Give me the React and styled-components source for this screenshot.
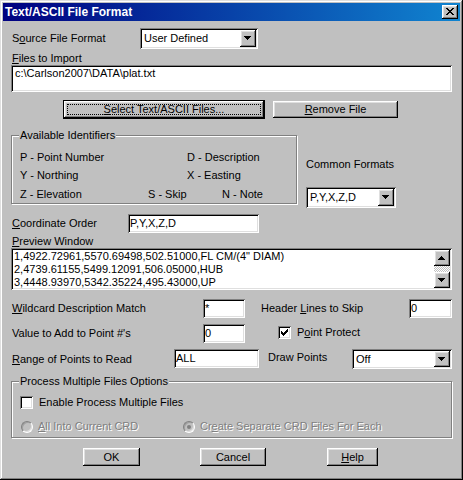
import React from 'react';
import styled, { createGlobalStyle, css } from 'styled-components';

const GlobalStyle = createGlobalStyle`
  html, body { margin: 0; padding: 0; background: #c0c0c0; }
  body {
    font-family: "Liberation Sans", Arial, sans-serif;
    font-size: 11px;
    color: #000;
  }
  * { box-sizing: border-box; }
`;

const raised = css`
  background: #c0c0c0;
  box-shadow: inset -1px -1px #000, inset 1px 1px #fff,
    inset -2px -2px #808080, inset 2px 2px #dfdfdf;
`;

const sunken = css`
  background: #fff;
  box-shadow: inset 1px 1px #808080, inset -1px -1px #fff,
    inset 2px 2px #000, inset -2px -2px #dfdfdf;
`;

const Window = styled.div`
  width: 463px;
  height: 480px;
  padding: 3px;
  background: #c0c0c0;
  box-shadow: inset -1px -1px #000, inset 1px 1px #dfdfdf,
    inset -2px -2px #808080, inset 2px 2px #fff;
  display: flex;
  flex-direction: column;
`;

const TitleBar = styled.div`
  height: 18px;
  flex: none;
  padding: 0 2px;
  display: flex;
  align-items: center;
  justify-content: space-between;
  background: linear-gradient(90deg, #000080, #1084d0);
`;

const Title = styled.span`
  color: #fff;
  font-weight: bold;
  font-size: 12px;
  line-height: 14px;
  white-space: nowrap;
`;

const CloseButton = styled.div`
  ${raised};
  width: 16px;
  height: 14px;
  display: flex;
  align-items: center;
  justify-content: center;
  padding: 0 1px 1px 0;
`;

const Body = styled.div`
  padding: 0 8px;
  display: flex;
  flex-direction: column;
`;

const Row = styled.div`
  display: flex;
  align-items: center;
  flex: none;
  margin-top: ${(p) => p.$mt || 0}px;
  height: ${(p) => p.$h}px;
  padding-left: ${(p) => p.$pl || 0}px;
`;

const Label = styled.span`
  flex: none;
  width: ${(p) => (p.$w ? `${p.$w}px` : 'auto')};
  margin-left: ${(p) => p.$ml || 0}px;
  padding-left: ${(p) => p.$pl || 0}px;
  margin-top: ${(p) => p.$dy || 0}px;
  line-height: 13px;
  white-space: nowrap;
  color: ${(p) => (p.$disabled ? '#808080' : '#000')};
  text-shadow: ${(p) => (p.$disabled ? '1px 1px 0 #fff' : 'none')};
`;

const BlockLabel = styled.div`
  flex: none;
  margin-top: ${(p) => p.$mt || 0}px;
  padding-left: 1px;
  line-height: 13px;
  height: 13px;
`;

const Combo = styled.div`
  ${sunken};
  flex: none;
  width: ${(p) => p.$w}px;
  height: ${(p) => p.$h || 21}px;
  padding: 2px;
  margin-left: ${(p) => p.$ml || 0}px;
  margin-top: ${(p) => p.$mt || 0}px;
  display: flex;
  align-items: stretch;
`;

const ComboValue = styled.span`
  flex: 1;
  padding-left: 2px;
  line-height: 13px;
  display: flex;
  align-items: center;
  white-space: nowrap;
`;

const DropButton = styled.span`
  ${raised};
  flex: none;
  width: 16px;
  display: flex;
  align-items: center;
  justify-content: center;
  padding: 0 1px 1px 0;
`;

const FileBox = styled.div`
  ${sunken};
  flex: none;
  height: 27px;
  padding: 2px 2px 0 4px;
  line-height: 13px;
`;

const ButtonRow = styled.div`
  display: flex;
  align-items: center;
  flex: none;
  margin-top: ${(p) => p.$mt}px;
  height: ${(p) => p.$h}px;
`;

const PushButton = styled.div`
  ${raised};
  position: relative;
  flex: none;
  width: ${(p) => p.$w}px;
  height: ${(p) => p.$h || 18}px;
  margin-left: ${(p) => p.$ml || 0}px;
  display: flex;
  align-items: center;
  justify-content: center;
  line-height: 13px;
  white-space: nowrap;
  ${(p) =>
    p.$default &&
    css`
      box-shadow: inset 0 0 0 1px #000, inset -2px -2px #000, inset 2px 2px #fff,
        inset -3px -3px #808080, inset 3px 3px #dfdfdf;
      &::after {
        content: '';
        position: absolute;
        inset: 4px;
        border: 1px dotted #000;
      }
    `}
`;

const Middle = styled.div`
  display: flex;
  flex: none;
  margin-top: 16px;
  height: 73px;
`;

const Group = styled.div`
  position: relative;
  flex: none;
  width: ${(p) => (p.$w ? `${p.$w}px` : 'auto')};
  height: ${(p) => p.$h}px;
  margin-top: ${(p) => p.$mt || 0}px;
  border: 1px solid #808080;
  box-shadow: inset 1px 1px #fff, 1px 1px #fff;
  padding: ${(p) => p.$pad};
`;

const Legend = styled.span`
  position: absolute;
  top: -7px;
  left: 7px;
  padding: 0 1px;
  background: #c0c0c0;
  line-height: 13px;
  white-space: nowrap;
`;

const IdGrid = styled.div`
  display: grid;
  grid-template-columns: 128px 39px 35px auto;
  grid-auto-rows: 18.5px;
  align-items: center;
  line-height: 13px;
  white-space: nowrap;
`;

const IdItem = styled.span`
  grid-column: ${(p) => p.$col};
`;

const SideColumn = styled.div`
  display: flex;
  flex-direction: column;
  margin-left: 9px;
  padding-top: 23px;
`;

const TextField = styled.div`
  ${sunken};
  flex: none;
  width: ${(p) => p.$w}px;
  height: 19px;
  margin-left: ${(p) => p.$ml || 0}px;
  align-self: ${(p) => p.$self || 'auto'};
  padding: 0 2px;
  display: flex;
  align-items: center;
  line-height: 13px;
  white-space: nowrap;
`;

const ListBox = styled.div`
  ${sunken};
  flex: none;
  height: 42px;
  padding: 2px;
  display: flex;
`;

const ListLines = styled.div`
  flex: 1;
  padding-left: 1px;
  line-height: 13px;
  white-space: nowrap;
  overflow: hidden;
`;

const ScrollBar = styled.div`
  flex: none;
  width: 16px;
  display: flex;
  flex-direction: column;
`;

const ScrollButton = styled.div`
  ${raised};
  flex: none;
  height: 16px;
  display: flex;
  align-items: center;
  justify-content: center;
  padding: 0 1px 1px 0;
`;

const ScrollTrack = styled.div`
  flex: 1;
  background-image: conic-gradient(#fff 25%, #c0c0c0 0 50%, #fff 0 75%, #c0c0c0 0);
  background-size: 2px 2px;
`;

const CheckOption = styled.div`
  display: flex;
  align-items: center;
  flex: none;
  height: 13px;
  margin-left: ${(p) => p.$ml || 0}px;
  margin-top: ${(p) => p.$dy || 0}px;
`;

const CheckBox = styled.span`
  ${sunken};
  flex: none;
  width: 13px;
  height: 13px;
  margin-right: 6px;
  display: flex;
  align-items: center;
  justify-content: center;
`;

const RadioOption = styled.div`
  display: flex;
  align-items: center;
  flex: none;
  width: ${(p) => (p.$w ? `${p.$w}px` : 'auto')};
  height: 13px;
`;

const Radio = styled.span`
  flex: none;
  width: 12px;
  height: 12px;
  margin-right: 5px;
  border-radius: 50%;
  border: 1px solid;
  border-color: #808080 #fff #fff #808080;
  background: #c0c0c0;
  box-shadow: inset 1px 1px #a0a0a0, inset -1px -1px #dfdfdf;
  display: flex;
  align-items: center;
  justify-content: center;
`;

const RadioDot = styled.span`
  width: 4px;
  height: 4px;
  border-radius: 50%;
  background: #808080;
`;

const GroupRow = styled.div`
  display: flex;
  align-items: center;
  margin-top: ${(p) => p.$mt || 0}px;
  padding-left: ${(p) => p.$pl || 0}px;
`;

const PixelGlyph = ({ rows, color = '#000' }) => (
  <svg width={rows[0].length} height={rows.length} shapeRendering="crispEdges">
    {rows.flatMap((r, y) =>
      [...r].map((c, x) =>
        c === '#' ? <rect key={`${x}-${y}`} x={x} y={y} width="1" height="1" fill={color} /> : null
      )
    )}
  </svg>
);

const CLOSE_GLYPH = ['##....##', '.##..##.', '..####..', '...##...', '..####..', '.##..##.', '##....##'];
const CHECK_GLYPH = ['......#', '.....##', '#...###', '##.###.', '#####..', '.###...', '..#....'];
const DOWN_GLYPH = ['#######', '.#####.', '..###..', '...#...'];
const UP_GLYPH = ['...#...', '..###..', '.#####.', '#######'];

const Key = ({ children }) => <u>{children}</u>;

const ComboBox = ({ value, ...rest }) => (
  <Combo {...rest}>
    <ComboValue>{value}</ComboValue>
    <DropButton>
      <PixelGlyph rows={DOWN_GLYPH} />
    </DropButton>
  </Combo>
);

const previewLines = [
  '1,4922.72961,5570.69498,502.51000,FL CM/(4" DIAM)',
  '2,4739.61155,5499.12091,506.05000,HUB',
  '3,4448.93970,5342.35224,495.43000,UP',
];

export default function App() {
  return (
    <>
      <GlobalStyle />
      <Window>
        <TitleBar>
          <Title>Text/ASCII File Format</Title>
          <CloseButton>
            <PixelGlyph rows={CLOSE_GLYPH} />
          </CloseButton>
        </TitleBar>

        <Body>
          <Row $mt={7} $h={21}>
            <Label $w={129} $pl={1}>
              S<Key>o</Key>urce File Format
            </Label>
            <ComboBox $w={118} value="User Defined" />
          </Row>

          <BlockLabel $mt={3}>
            <Key>F</Key>iles to Import
          </BlockLabel>
          <FileBox>c:\Carlson2007\DATA\plat.txt</FileBox>

          <ButtonRow $mt={8} $h={19}>
            <PushButton $default $w={202} $h={19} $ml={52}>
              <span>
                <Key>S</Key>elect Text/ASCII Files...
              </span>
            </PushButton>
            <PushButton $w={125} $h={17} $ml={8}>
              <span>
                <Key>R</Key>emove File
              </span>
            </PushButton>
          </ButtonRow>

          <Middle>
            <Group $w={286} $h={69} $pad="12px 0 0 8px">
              <Legend>Available Identifiers</Legend>
              <IdGrid>
                <IdItem $col="1 / 3">P - Point Number</IdItem>
                <IdItem $col="3 / 5">D - Description</IdItem>
                <IdItem $col="1 / 3">Y - Northing</IdItem>
                <IdItem $col="3 / 5">X - Easting</IdItem>
                <IdItem $col="1 / 2">Z - Elevation</IdItem>
                <IdItem $col="2 / 4">S - Skip</IdItem>
                <IdItem $col="4 / 5">N - Note</IdItem>
              </IdGrid>
            </Group>
            <SideColumn>
              <Label>Common Formats</Label>
              <ComboBox $w={90} $mt={16} value="P,Y,X,Z,D" />
            </SideColumn>
          </Middle>

          <Row $mt={6} $h={19}>
            <Label $w={117} $pl={1}>
              <Key>C</Key>oordinate Order
            </Label>
            <TextField $w={131}>P,Y,X,Z,D</TextField>
          </Row>

          <BlockLabel $mt={2}>
            <Key>P</Key>review Window
          </BlockLabel>
          <ListBox>
            <ListLines>
              {previewLines.map((line) => (
                <div key={line}>{line}</div>
              ))}
            </ListLines>
            <ScrollBar>
              <ScrollButton>
                <PixelGlyph rows={UP_GLYPH} />
              </ScrollButton>
              <ScrollTrack />
              <ScrollButton>
                <PixelGlyph rows={DOWN_GLYPH} />
              </ScrollButton>
            </ScrollBar>
          </ListBox>

          <Row $mt={9} $h={19}>
            <Label $w={192} $pl={1}>
              <Key>W</Key>ildcard Description Match
            </Label>
            <TextField $w={42}>*</TextField>
            <Label $w={148} $ml={16}>
              Header <Key>L</Key>ines to Skip
            </Label>
            <TextField $w={43}>0</TextField>
          </Row>

          <Row $mt={6} $h={19}>
            <Label $w={192} $pl={1}>
              Value to Add to Point #'s
            </Label>
            <TextField $w={42}>0</TextField>
            <CheckOption $ml={33} $dy={-3}>
              <CheckBox>
                <PixelGlyph rows={CHECK_GLYPH} />
              </CheckBox>
              <Label>
                P<Key>o</Key>int Protect
              </Label>
            </CheckOption>
          </Row>

          <Row $mt={6} $h={20}>
            <Label $w={163} $pl={1}>
              <Key>R</Key>ange of Points to Read
            </Label>
            <TextField $w={85} $self="flex-start">ALL</TextField>
            <Label $w={84} $ml={9} $dy={-3}>
              Draw Points
            </Label>
            <ComboBox $w={100} $h={20} value="Off" />
          </Row>

          <Group $h={57} $mt={12} $pad="14px 0 0 8px">
            <Legend>Process Multiple Files Options</Legend>
            <GroupRow>
              <CheckOption>
                <CheckBox />
                <Label>Enable Process Multiple Files</Label>
              </CheckOption>
            </GroupRow>
            <GroupRow $mt={11} $pl={1}>
              <RadioOption $w={162}>
                <Radio />
                <Label $disabled>
                  <Key>A</Key>ll Into Current CRD
                </Label>
              </RadioOption>
              <RadioOption>
                <Radio>
                  <RadioDot />
                </Radio>
                <Label $disabled>
                  Cr<Key>e</Key>ate Separate CRD Files For Each
                </Label>
              </RadioOption>
            </GroupRow>
          </Group>

          <ButtonRow $mt={10} $h={18}>
            <PushButton $w={57} $ml={72}>OK</PushButton>
            <PushButton $w={66} $ml={60}>Cancel</PushButton>
            <PushButton $w={51} $ml={61}>
              <span>
                <Key>H</Key>elp
              </span>
            </PushButton>
          </ButtonRow>
        </Body>
      </Window>
    </>
  );
}
